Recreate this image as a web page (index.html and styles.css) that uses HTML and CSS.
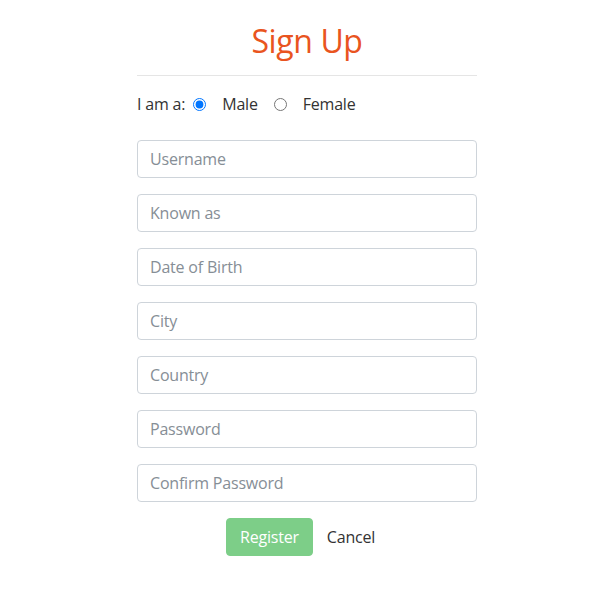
FILE: index.html
```html
<!DOCTYPE html>
<html>
<head>
<meta charset="utf-8">
<link rel="stylesheet" href="styles.css">
</head>
<body>
<form class="signup">
  <h2 class="title">Sign Up</h2>
  <hr class="rule">
  <div class="gender">
    <span class="gender-label">I am a:</span>
    <label class="radio"><input type="radio" name="gender" checked><span>Male</span></label>
    <label class="radio"><input type="radio" name="gender"><span>Female</span></label>
  </div>
  <input class="field" type="text" placeholder="Username">
  <input class="field" type="text" placeholder="Known as">
  <input class="field" type="text" placeholder="Date of Birth">
  <input class="field" type="text" placeholder="City">
  <input class="field" type="text" placeholder="Country">
  <input class="field" type="password" placeholder="Password">
  <input class="field" type="password" placeholder="Confirm Password">
  <div class="actions">
    <button class="btn btn-success" type="submit" disabled>Register</button>
    <button class="btn btn-default" type="button">Cancel</button>
  </div>
</form>
</body>
</html>
```

FILE: styles.css
```css
html, body {
  margin: 0;
  padding: 0;
  background: #fff;
}
body {
  font-family: "Open Sans", "Noto Sans", sans-serif;
  font-size: 16px;
  letter-spacing: -0.2px;
  color: #333;
}
.signup {
  width: 340px;
  margin-left: 137px;
  padding-top: 21px;
  display: flex;
  flex-direction: column;
}
.title {
  margin: 0;
  text-align: center;
  color: #e95420;
  font-size: 32px;
  font-weight: 400;
  line-height: 40px;
  letter-spacing: -0.4px;
}
.rule {
  margin: 14px 0 0;
  border: 0;
  border-top: 1px solid rgba(0,0,0,0.1);
  height: 0;
}
.gender {
  display: flex;
  align-items: center;
  height: 24px;
  margin-top: 16px;
  margin-bottom: 24px;
}
.gender-label {
  margin-right: 8px;
}
.radio {
  display: flex;
  align-items: center;
  margin-right: 16px;
}
.radio input {
  margin: 0 16px 0 0;
  width: 13px;
  height: 13px;
}
.field {
  box-sizing: border-box;
  height: 38px;
  padding: 6px 12px;
  margin: 0 0 16px;
  border: 1px solid #ced4da;
  border-radius: 4px;
  font-family: inherit;
  font-size: 16px;
  letter-spacing: -0.2px;
  color: #495057;
  background: #fff;
}
.field::placeholder {
  color: #868e96;
  opacity: 1;
}
.actions {
  display: flex;
  padding-left: 89px;
}
.btn {
  box-sizing: border-box;
  height: 38px;
  padding: 6px 13px;
  border: 1px solid transparent;
  border-radius: 4px;
  font-family: inherit;
  font-size: 16px;
  letter-spacing: -0.2px;
  line-height: 24px;
  background: transparent;
}
.btn-success {
  background: #38b44a;
  border-color: #38b44a;
  color: #fff;
  opacity: 0.65;
}
.btn-default {
  color: #333;
  padding-left: 13px;
}
```
